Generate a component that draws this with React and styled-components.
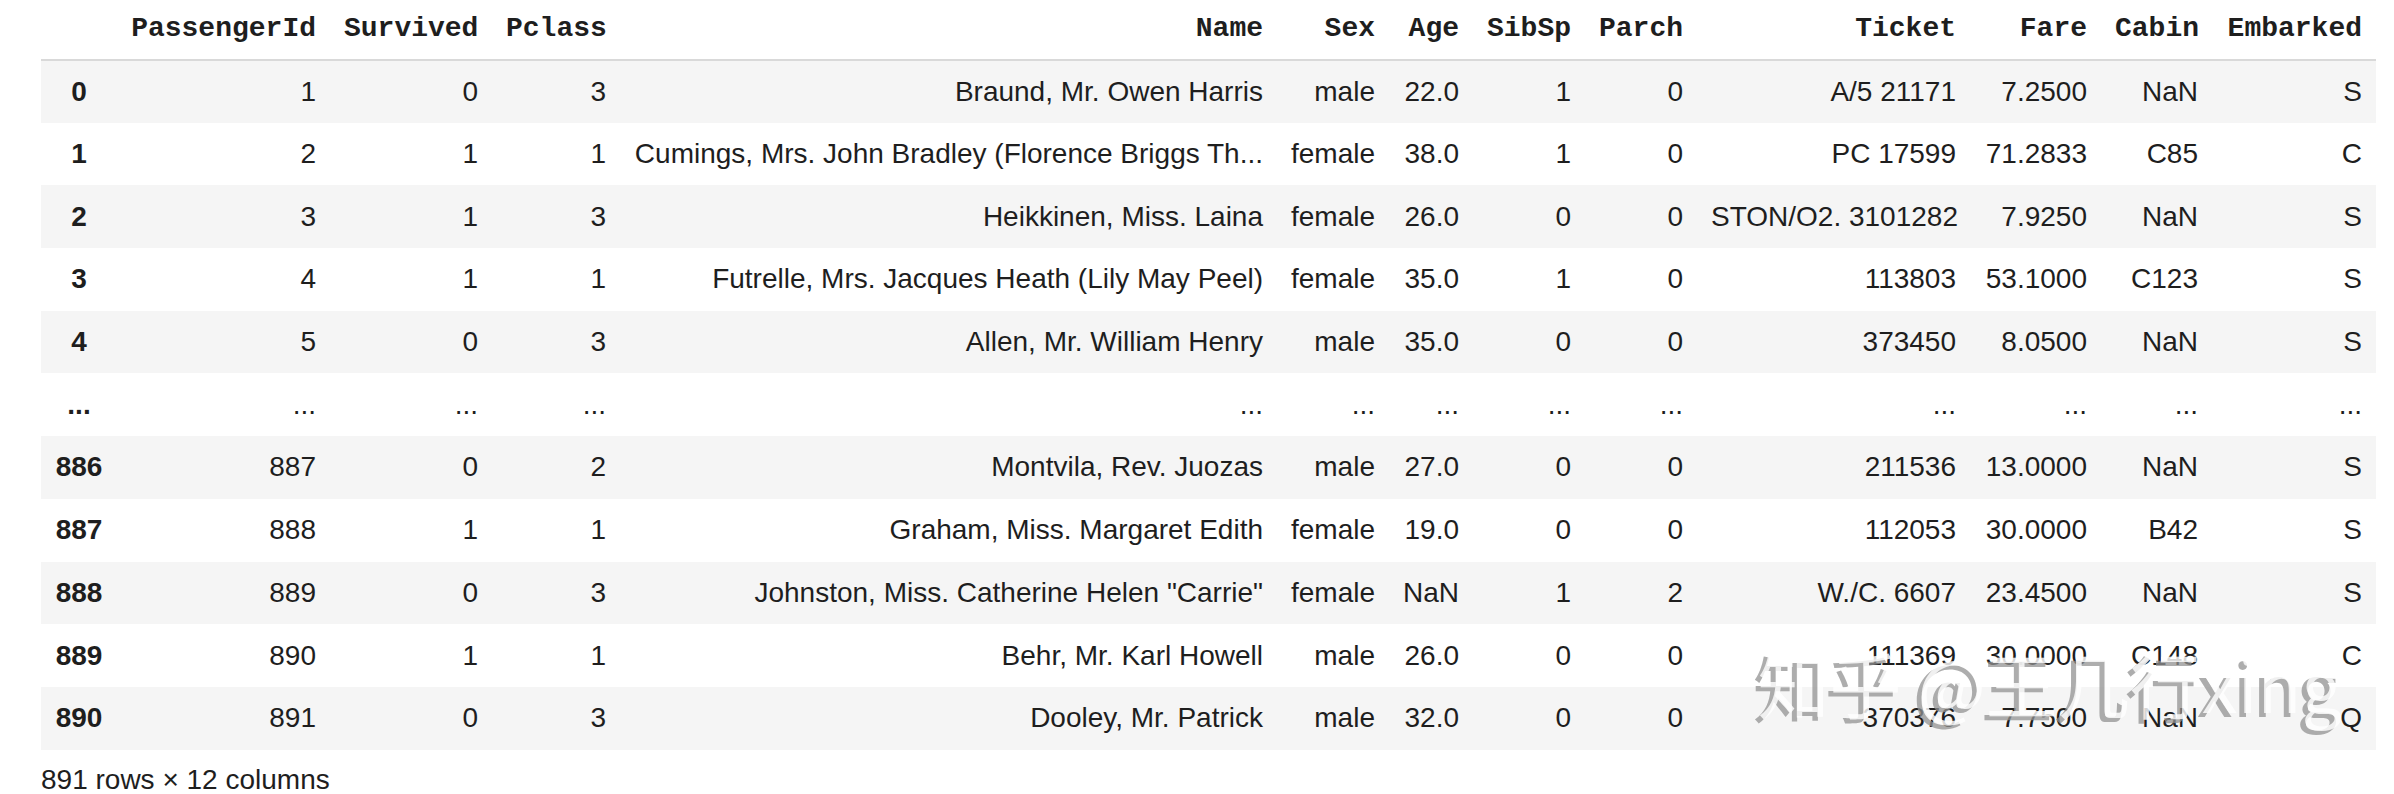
import React from 'react';
import styled, { createGlobalStyle } from 'styled-components';

const GlobalStyle = createGlobalStyle`
    body {
        margin: 0;
        background: #ffffff;
        color: #1e1e1e;
        font-family: "Liberation Sans", Arial, Helvetica, sans-serif;
    }
`;

const Page = styled.div`
    position: relative;
    width: 2394px;
    height: 794px;
    overflow: hidden;
    padding-left: 41px;
    box-sizing: border-box;
`;

const Frame = styled.table`
    border-collapse: collapse;
    border-spacing: 0;
    table-layout: fixed;
    width: 2335px;
    font-size: 28px;
`;

const Col = styled.col`
    width: ${props => props.$w}px;
`;

const HeadRow = styled.tr`
    height: 60px;
    border-bottom: 2px solid #d9d9d9;
`;

const HeadCell = styled.th`
    padding: 0 14px 2px 14px;
    text-align: right;
    vertical-align: middle;
    font-family: "Liberation Mono", "Courier New", monospace;
    font-weight: bold;
    font-size: 28px;
    white-space: nowrap;
`;

const Row = styled.tr`
    height: 62.7px;
    background: ${props => props.$striped ? '#f5f5f5' : '#ffffff'};
`;

const IndexCell = styled.th`
    padding: 0 8px;
    text-align: center;
    vertical-align: middle;
    font-weight: bold;
    white-space: nowrap;
`;

const Cell = styled.td`
    padding: 0 14px;
    text-align: right;
    vertical-align: middle;
    white-space: nowrap;
`;

const Footer = styled.div`
    margin-top: 15px;
    font-size: 28px;
    line-height: 30px;
`;

const Watermark = styled.div`
    position: absolute;
    top: 632px;
    right: 52px;
    font-family: "Noto Sans CJK SC", "Noto Sans", sans-serif;
    font-size: 72px;
    font-weight: 400;
    line-height: 100px;
    white-space: pre;
    color: rgba(255, 255, 255, 0.82);
    text-shadow: -5px 4px 0 rgba(145, 145, 145, 0.75);
    pointer-events: none;
`;

const columns = [
    { name: '', w: 76 },
    { name: 'PassengerId', w: 213 },
    { name: 'Survived', w: 162 },
    { name: 'Pclass', w: 128 },
    { name: 'Name', w: 657 },
    { name: 'Sex', w: 112 },
    { name: 'Age', w: 84 },
    { name: 'SibSp', w: 112 },
    { name: 'Parch', w: 112 },
    { name: 'Ticket', w: 273 },
    { name: 'Fare', w: 131 },
    { name: 'Cabin', w: 111 },
    { name: 'Embarked', w: 164 },
];

const dots = ['...', '...', '...', '...', '...', '...', '...', '...', '...', '...', '...', '...'];

const rows = [
    ['0', ['1', '0', '3', 'Braund, Mr. Owen Harris', 'male', '22.0', '1', '0', 'A/5 21171', '7.2500', 'NaN', 'S']],
    ['1', ['2', '1', '1', 'Cumings, Mrs. John Bradley (Florence Briggs Th...', 'female', '38.0', '1', '0', 'PC 17599', '71.2833', 'C85', 'C']],
    ['2', ['3', '1', '3', 'Heikkinen, Miss. Laina', 'female', '26.0', '0', '0', 'STON/O2. 3101282', '7.9250', 'NaN', 'S']],
    ['3', ['4', '1', '1', 'Futrelle, Mrs. Jacques Heath (Lily May Peel)', 'female', '35.0', '1', '0', '113803', '53.1000', 'C123', 'S']],
    ['4', ['5', '0', '3', 'Allen, Mr. William Henry', 'male', '35.0', '0', '0', '373450', '8.0500', 'NaN', 'S']],
    ['...', dots],
    ['886', ['887', '0', '2', 'Montvila, Rev. Juozas', 'male', '27.0', '0', '0', '211536', '13.0000', 'NaN', 'S']],
    ['887', ['888', '1', '1', 'Graham, Miss. Margaret Edith', 'female', '19.0', '0', '0', '112053', '30.0000', 'B42', 'S']],
    ['888', ['889', '0', '3', 'Johnston, Miss. Catherine Helen "Carrie"', 'female', 'NaN', '1', '2', 'W./C. 6607', '23.4500', 'NaN', 'S']],
    ['889', ['890', '1', '1', 'Behr, Mr. Karl Howell', 'male', '26.0', '0', '0', '111369', '30.0000', 'C148', 'C']],
    ['890', ['891', '0', '3', 'Dooley, Mr. Patrick', 'male', '32.0', '0', '0', '370376', '7.7500', 'NaN', 'Q']],
];

export default function App() {
    return (
        <Page>
            <GlobalStyle />
            <Frame>
                <colgroup>
                    {columns.map((c, i) => <Col key={i} $w={c.w} />)}
                </colgroup>
                <thead>
                    <HeadRow>
                        {columns.map((c, i) => <HeadCell key={i}>{c.name}</HeadCell>)}
                    </HeadRow>
                </thead>
                <tbody>
                    {rows.map(([idx, values], r) => (
                        <Row key={r} $striped={r % 2 === 0}>
                            <IndexCell>{idx}</IndexCell>
                            {values.map((v, i) => <Cell key={i}>{v}</Cell>)}
                        </Row>
                    ))}
                </tbody>
            </Frame>
            <Footer>891 rows × 12 columns</Footer>
            <Watermark>知乎 @王几行xing</Watermark>
        </Page>
    );
}
